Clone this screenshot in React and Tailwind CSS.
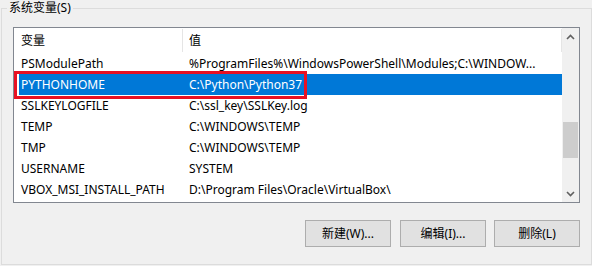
import React from "react";

const rows = [
	{ name: "PSModulePath", value: "%ProgramFiles%\\WindowsPowerShell\\Modules;C:\\WINDOW..." },
	{ name: "PYTHONHOME", value: "C:\\Python\\Python37", selected: true },
	{ name: "SSLKEYLOGFILE", value: "C:\\ssl_key\\SSLKey.log" },
	{ name: "TEMP", value: "C:\\WINDOWS\\TEMP" },
	{ name: "TMP", value: "C:\\WINDOWS\\TEMP" },
	{ name: "USERNAME", value: "SYSTEM" },
	{ name: "VBOX_MSI_INSTALL_PATH", value: "D:\\Program Files\\Oracle\\VirtualBox\\" },
];

const Chevron = ({ up }) => (
	<svg width="9" height="6" viewBox="0 0 9 6">
		<path
			d={up ? "M1 5 L4.5 1.5 L8 5" : "M1 1 L4.5 4.5 L8 1"}
			fill="none"
			stroke="#606060"
			strokeWidth="1.6"
		/>
	</svg>
);

const Button = ({ children, className = "" }) => (
	<button
		className={
			"w-[86px] h-[27px] bg-[#e1e1e1] border border-[#adadad] text-[12px] leading-none text-black flex items-center justify-center " +
			className
		}
	>
		{children}
	</button>
);

const App = () => {
	return (
		<div
			className="w-[592px] h-[266px] bg-[#f0f0f0] text-black text-[12px] overflow-hidden"
			style={{ fontFamily: '"Noto Sans", "Noto Sans CJK SC", sans-serif' }}
		>
			<fieldset className="ml-[1px] w-[591px] h-[265px] border border-[#dcdcdc]">
				<legend className="ml-[5px] px-[2px] leading-[16px]">系统变量(S)</legend>

				{/* 列表框 */}
				<div className="relative ml-[11px] mt-[11px] w-[567px] h-[176px] border border-[#828790] bg-white flex">
					<div className="flex-1 flex flex-col">
						<div className="h-[25px] flex">
							<div className="w-[169px] pl-[7px] flex items-center border-r border-[#e5e5e5] my-[1px]">
								变量
							</div>
							<div className="flex-1 pl-[6px] flex items-center border-r border-[#e5e5e5] my-[1px]">
								值
							</div>
						</div>
						{rows.map((r) => (
							<div key={r.name} className="h-[21px] flex">
								<div
									className={
										"ml-[5px] flex-1 flex items-center whitespace-nowrap " +
										(r.selected ? "bg-[#0078d7] text-white" : "")
									}
								>
									<div className="w-[163px] pl-[2px] overflow-hidden">{r.name}</div>
									<div className="flex-1 pl-[7px] overflow-hidden">{r.value}</div>
								</div>
							</div>
						))}
					</div>

					{/* 滚动条 */}
					<div className="w-[17px] bg-[#f0f0f0] flex flex-col">
						<div className="h-[17px] flex items-center justify-center">
							<Chevron up />
						</div>
						<div className="flex-1 px-[1px]">
							<div className="mt-[77px] h-[36px] bg-[#cdcdcd]"></div>
						</div>
						<div className="h-[17px] flex items-center justify-center">
							<Chevron />
						</div>
					</div>

					{/* 红色标注框 */}
					<div className="absolute left-0 top-[43px] w-[293px] h-[28px] border-[3px] border-[#e81123]"></div>
				</div>

				<div className="mt-[17px] w-[578px] flex justify-end">
					<Button>新建(W)...</Button>
					<Button className="ml-[9px]">编辑(I)...</Button>
					<Button className="ml-[8px]">删除(L)</Button>
				</div>
			</fieldset>
		</div>
	);
};

export default App;
